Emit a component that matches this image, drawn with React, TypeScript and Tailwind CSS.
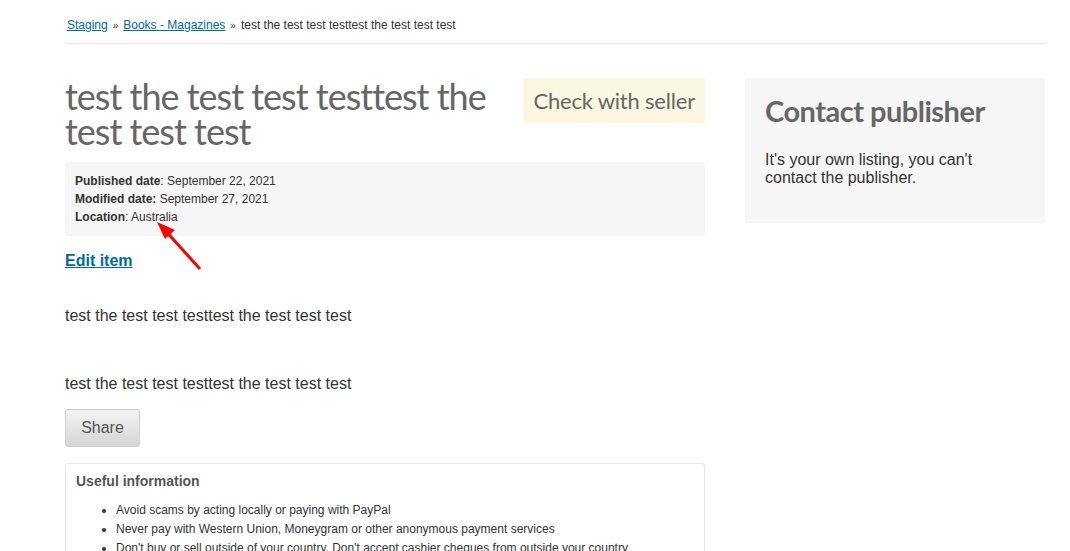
import React from "react";

export default function App() {
  const sans = { fontFamily: '"Liberation Sans", Arial, sans-serif' };
  return (
    <div className="min-h-[551px] bg-white text-[#333]" style={sans}>
      <div className="ml-[65px] w-[980px] pt-[18px]">
        <div className="pb-[10px] border-b border-[#e6e6e6] text-[12px] leading-[14px] text-[#333] ml-[2px]">
          <a className="text-[#0068a3] underline" href="#">Staging</a>
          <span className="mx-[5px] text-[10px]">»</span>
          <a className="text-[#0068a3] underline" href="#">Books - Magazines</a>
          <span className="mx-[5px] text-[10px]">»</span>
          <span>test the test test testtest the test test test</span>
        </div>

        <div className="flex gap-[40px] pt-[34px]">
          <div className="w-[640px]">
            <div className="flex items-start justify-between">
              <h1
                className="w-[440px] text-[36px] leading-[35px] text-[#666] pt-[1px]"
                style={{ fontFamily: 'Lato, sans-serif', letterSpacing: "-1px" }}
              >
                test the test test testtest the test test test
              </h1>
              <div
                className="bg-[#fcf7e3] h-[45px] px-[10px] flex items-center text-[22px] text-[#666]"
                style={{ fontFamily: 'Lato, sans-serif', letterSpacing: "-0.2px" }}
              >
                Check with seller
              </div>
            </div>

            <div className="relative mt-[13px] bg-[#f6f6f6] rounded-[3px] px-[10px] py-[10px] text-[12px] leading-[18px] text-[#333]">
              <div><b>Published date</b>: September 22, 2021</div>
              <div><b>Modified date:</b> September 27, 2021</div>
              <div><b>Location</b>: Australia</div>
              <svg className="absolute left-[90px] top-[58px]" width="50" height="52" viewBox="0 0 50 52">
                <line x1="45" y1="49" x2="8" y2="8" stroke="#ff0000" strokeWidth="3" />
                <polygon points="2,2 20,10 10,19" fill="#ff0000" />
              </svg>
            </div>

            <div className="mt-[13px]">
              <a href="#" className="text-[16px] font-bold text-[#0068a3] underline">Edit item</a>
            </div>

            <p className="mt-[34px] text-[16px] leading-[18px] text-[#333]">test the test test testtest the test test test</p>
            <p className="mt-[50px] text-[16px] leading-[18px] text-[#333]">test the test test testtest the test test test</p>

            <button
              className="mt-[16px] w-[75px] h-[38px] rounded-[3px] border border-[#cfcfcf] bg-gradient-to-b from-[#f4f4f4] to-[#d5d5d5] text-[16px] text-[#555]"
              style={sans}
            >
              Share
            </button>

            <div className="mt-[16px] border border-[#e6e6e6] rounded-[3px] px-[10px] pt-[7px] h-[120px]">
              <div className="text-[14px] font-bold text-[#555]">Useful information</div>
              <ul className="mt-[9px] pl-[40px] list-disc text-[12px] leading-[19px] text-[#333]">
                <li>Avoid scams by acting locally or paying with PayPal</li>
                <li>Never pay with Western Union, Moneygram or other anonymous payment services</li>
                <li>Don't buy or sell outside of your country. Don't accept cashier cheques from outside your country</li>
              </ul>
            </div>
          </div>

          <div className="w-[300px]">
            <div className="bg-[#f6f6f6] rounded-[3px] px-[20px] pt-[16px] pb-[36px]">
              <h2 className="text-[29px] font-bold text-[#666] leading-[34px]" style={{ fontFamily: 'Lato, sans-serif', letterSpacing: "-0.5px" }}>
                Contact publisher
              </h2>
              <p className="mt-[23px] text-[16px] leading-[18px] text-[#333]">
                It's your own listing, you can't contact the publisher.
              </p>
            </div>
          </div>
        </div>
      </div>
    </div>
  );
}
